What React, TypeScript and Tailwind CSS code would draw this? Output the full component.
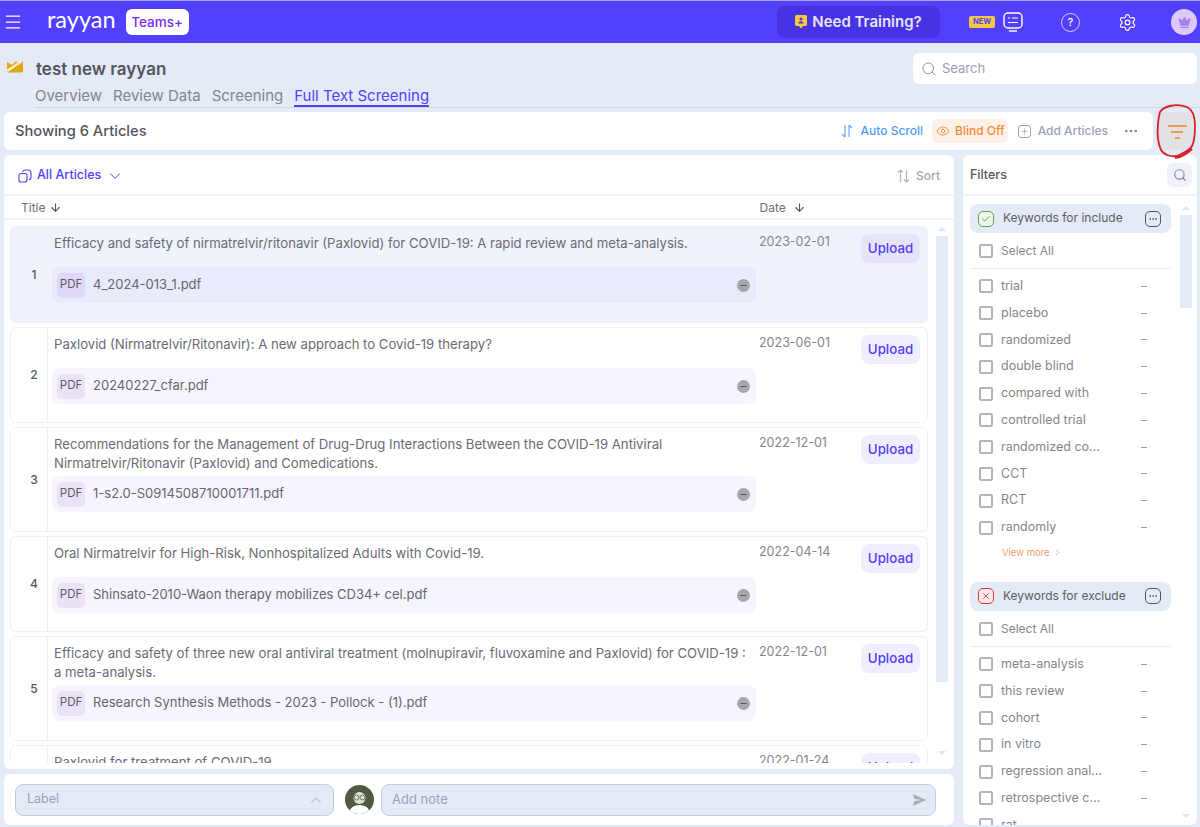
import React from 'react';
import { ChevronDown, ChevronRight, ChevronUp, Crown, Menu, Minus, Search, Settings, Check, X, Ellipsis, Plus, Eye, ArrowDown } from 'lucide-react';

const articles = [
  { n: 1, title: 'Efficacy and safety of nirmatrelvir/ritonavir (Paxlovid) for COVID-19: A rapid review and meta-analysis.', file: '4_2024-013_1.pdf', date: '2023-02-01', active: true, pb: 'pb-[19px]' },
  { n: 2, title: 'Paxlovid (Nirmatrelvir/Ritonavir): A new approach to Covid-19 therapy?', file: '20240227_cfar.pdf', date: '2023-06-01', pb: 'pb-[18px]' },
  { n: 3, title: 'Recommendations for the Management of Drug-Drug Interactions Between the COVID-19 Antiviral\nNirmatrelvir/Ritonavir (Paxlovid) and Comedications.', file: '1-s2.0-S0914508710001711.pdf', date: '2022-12-01', pb: 'pb-[19px]' },
  { n: 4, title: 'Oral Nirmatrelvir for High-Risk, Nonhospitalized Adults with Covid-19.', file: 'Shinsato-2010-Waon therapy mobilizes CD34+ cel.pdf', date: '2022-04-14', pb: 'pb-[18px]' },
  { n: 5, title: 'Efficacy and safety of three new oral antiviral treatment (molnupiravir, fluvoxamine and Paxlovid) for COVID-19 :\na meta-analysis.', file: 'Research Synthesis Methods - 2023 - Pollock - (1).pdf', date: '2022-12-01', pb: 'pb-[19px]' },
  { n: 6, title: 'Paxlovid for treatment of COVID-19', date: '2022-01-24', pb: 'pb-[19px]' },
];

const includeWords = ['trial', 'placebo', 'randomized', 'double blind', 'compared with', 'controlled trial', 'randomized co…', 'CCT', 'RCT', 'randomly'];
const excludeWords = ['meta-analysis', 'this review', 'cohort', 'in vitro', 'regression anal…', 'retrospective c…', 'rat'];

const Box = () => <span className="w-[14px] h-[14px] rounded-[2px] border-2 border-[#b4b4b8] shrink-0" />;

const KeywordRow = ({ label }: { label: string }) => (
  <div className="h-[26.8px] flex items-center pl-[9px] shrink-0">
    <Box />
    <span className="ml-2 w-[140px] text-[12.5px] text-[#85858c]">{label}</span>
    <span className="w-[6px] h-px bg-[#9a9aa0]" />
  </div>
);

const GroupHeader = ({ label, include }: { label: string; include?: boolean }) => (
  <div className="h-[29px] rounded-lg bg-[#e4ebf7] flex items-center pl-2 pr-[10px] shrink-0">
    <span className={`w-[16px] h-[16px] rounded-[5px] border flex items-center justify-center ${include ? 'border-[#5f9e54] bg-[#eef6ea]' : 'border-[#d9363e] bg-[#fbe9ea]'}`}>
      {include ? <Check size={10} className="text-[#4f8f45]" /> : <X size={10} className="text-[#d9363e]" />}
    </span>
    <span className="ml-[9px] -mt-px text-[12px] text-[#5c5c66] flex-1">{label}</span>
    <span className="w-[16px] h-[16px] rounded-[5px] border border-[#55555e] flex items-center justify-center">
      <Ellipsis size={10} className="text-[#55555e]" />
    </span>
  </div>
);

const SelectAll = () => (
  <div className="h-[36px] shrink-0 flex items-center pl-[9px] pt-[1px] border-b border-[#e9ecf2]">
    <Box />
    <span className="ml-2 text-[12px] text-[#85858c]">Select All</span>
  </div>
);

const ScrollBar = ({ thumb, className }: { thumb: string; className: string }) => (
  <div className={`flex flex-col items-center shrink-0 w-[12px] ${className}`}>
    <span className="w-0 h-0 border-x-[4px] border-x-transparent border-b-[4px] border-b-[#dde5f3]" />
    <div className={`w-[12px] bg-[#e4ebf7] mt-[5px] ${thumb}`} />
    <span className="flex-1" />
    <span className="w-0 h-0 border-x-[4px] border-x-transparent border-t-[4px] border-t-[#dde5f3]" />
  </div>
);

export default function App() {
  return (
    <div className="relative h-[827px] overflow-hidden bg-[#e4ebf7] flex flex-col font-['Inter',sans-serif] text-[#5c5c66]">
      {/* Top bar */}
      <header className="h-[43px] shrink-0 bg-[#5340ff] border-t border-[#a9a4e8] flex items-center text-white">
        <Menu size={20} strokeWidth={1.5} className="ml-[3px]" />
        <span className="ml-[24px] text-[23.5px] leading-none font-['Lato',sans-serif] -mt-1">rayyan</span>
        <span className="ml-[10px] h-[26px] w-[63px] rounded-md bg-white text-[#7a2df0] text-[13.5px] font-medium flex items-center justify-center">Teams+</span>
        <div className="ml-auto w-[163px] h-[32px] rounded-lg bg-[#4633e3] flex items-center justify-center gap-[5px] mr-[29px]">
          <svg width="12" height="14" viewBox="0 0 12 14"><path d="M1.5 0h9A1.5 1.5 0 0 1 12 1.5v8A1.5 1.5 0 0 1 10.5 11H8l-2 2.5L4 11H1.5A1.5 1.5 0 0 1 0 9.5v-8A1.5 1.5 0 0 1 1.5 0z" fill="#f5c93a" /><circle cx="6" cy="4" r="1.5" fill="#4633e3" /><path d="M3.5 8.5c0-3 5-3 5 0z" fill="#4633e3" /></svg>
          <span className="text-[15px] font-semibold text-[#e6e3ff]">Need Training?</span>
        </div>
        <span className="w-[26px] h-[12px] rounded-[2px] bg-[#f5c93a] text-[#5340ff] text-[7.5px] font-bold flex items-center justify-center">NEW</span>
        <svg width="20" height="20" viewBox="0 0 20 20" fill="none" stroke="#fff" className="ml-[8px]">
          <rect x="1" y="1" width="18" height="15" rx="4" strokeWidth="1.4" />
          <path d="M5 6h2M9 6h6M5 10.5h10" strokeWidth="1.2" />
          <path d="M6 19h8" strokeWidth="1.4" />
        </svg>
        <span className="ml-[38px] w-[19px] h-[19px] rounded-full border border-[#cfcaff] flex items-center justify-center text-[11px] font-medium">?</span>
        <Settings size={19} strokeWidth={1.5} className="ml-[38px]" />
        <span className="ml-[34px] mr-[3px] w-[26px] h-[26px] rounded-full bg-[#dcc8fb] flex items-center justify-center">
          <Crown size={13} className="text-[#a884e8]" fill="#a884e8" />
        </span>
      </header>

      {/* Review title and tabs */}
      <div className="h-[64px] shrink-0 flex">
        <div className="flex-1 min-w-0">
          <div className="flex items-center pl-[7px] pt-[15px]">
            <svg width="16" height="12" viewBox="0 0 16 12" className="-mt-[5px]">
              <path d="M0 1l5 3 4-4 3 4 4-4v10.5a1 1 0 0 1-1 1H1a1 1 0 0 1-1-1z" fill="#e0a90f" />
              <path d="M0 8.5L10 2l1.5 1.5L1.5 10.5H0z" fill="#f6efd2" />
            </svg>
            <span className="ml-[13px] text-[17px] font-semibold text-[#55555e] leading-[22px]">test new rayyan</span>
          </div>
          <nav className="flex gap-[11px] pl-[35px] mt-[5px] text-[15px] text-[#85858c] leading-[22px]">
            <span>Overview</span>
            <span>Review Data</span>
            <span>Screening</span>
            <span className="text-[#5340ff] border-b-2 border-[#5340ff] h-[22px]">Full Text Screening</span>
          </nav>
        </div>
        <div className="w-[284px] h-[31px] mt-[10px] mr-[3px] rounded-md bg-white flex items-center pl-2 pt-px text-[13px] text-[#9a9db0]">
          <Search size={16} strokeWidth={1.5} className="text-[#8d93aa]" />
          <span className="ml-[5px]">Search</span>
        </div>
      </div>
      <div className="h-px ml-[34px] shrink-0 bg-[#cfd8e8]" />

      {/* Toolbar */}
      <div className="h-[38px] mt-[4px] shrink-0 flex pl-[4px]">
        <div className="w-[1149px] bg-white rounded-md flex items-center pl-[11px] pr-[14px] text-[12px]">
          <span className="text-[14.7px] font-medium text-[#55555e]">Showing 6 Articles</span>
          <svg width="12" height="14" viewBox="0 0 12 14" fill="none" stroke="#5ea4f5" strokeWidth="1.1" className="ml-auto">
            <path d="M4 1v12M4 13l-3-3M8 13V1M8 1l3 3" />
          </svg>
          <span className="ml-[8px] text-[#4f9df5] font-medium">Auto Scroll</span>
          <span className="ml-[9px] h-[24px] rounded-md bg-[#fdf0e6] flex items-center pl-1 pr-[3px] text-[#ef8b3c]">
            <Eye size={14} strokeWidth={1.5} />
            <span className="ml-[5px] font-medium">Blind Off</span>
          </span>
          <span className="ml-[10px] w-[13px] h-[13px] rounded-[3px] border border-[#9aa1b6] flex items-center justify-center">
            <Plus size={9} className="text-[#9aa1b6]" />
          </span>
          <span className="ml-[7px] text-[#9aa1b6] font-medium">Add Articles</span>
          <Ellipsis size={16} className="ml-[15px] text-[#7e86a0]" />
        </div>
        <div className="w-[36px] ml-[5px] pt-[2px] pl-[2px] rounded-md bg-[#e1e1e6] flex flex-col items-center justify-center gap-[4px]">
          <span className="w-[19px] h-[2px] bg-[#ef9a4c]" />
          <span className="w-[12px] h-[2px] bg-[#ef9a4c]" />
          <span className="w-[5px] h-[2px] bg-[#ef9a4c]" />
        </div>
      </div>

      <div className="flex-1 min-h-0 flex mt-[5px] pl-[4px] pb-[2px]">
        {/* Article list */}
        <div className="w-[950px] flex flex-col gap-[5px] shrink-0">
          <div className="h-[614px] bg-white rounded-md flex flex-col overflow-hidden">
            <div className="h-[41px] shrink-0 border-b-2 border-[#f2f3f6] flex items-center pl-[14px] pr-[14px] pt-[2px] text-[12.5px]">
              <svg width="14" height="14" viewBox="0 0 14 14" fill="none" stroke="#5340ff" strokeWidth="1.1">
                <rect x="1" y="4.5" width="8" height="8.5" rx="2" />
                <path d="M4.5 3A3 3 0 0 1 7 1h3a3 3 0 0 1 3 3v4.5a2 2 0 0 1-2 2" />
              </svg>
              <span className="ml-[5px] text-[#5340ff] font-medium">All Articles</span>
              <ChevronDown size={18} strokeWidth={1.3} className="ml-[5px] text-[#5340ff]" />
              <svg width="13" height="14" viewBox="0 0 13 14" fill="none" stroke="#b0b5c4" strokeWidth="1.2" className="ml-auto">
                <path d="M3.5 13V1M1 3.5L3.5 1 6 3.5M9.5 1v12M7 10.5L9.5 13l2.5-2.5" />
              </svg>
              <span className="ml-[6px] text-[#a0a5b5] font-medium text-[12px]">Sort</span>
            </div>
            <div className="h-[24px] shrink-0 flex items-center pt-px text-[12px] text-[#6e6e78] border-b-2 border-[#f2f3f6]">
              <span className="ml-[17px]">Title</span>
              <ArrowDown size={13} strokeWidth={2} className="ml-[4px] text-[#55555e]" />
              <span className="ml-[697px]">Date</span>
              <ArrowDown size={13} strokeWidth={2} className="ml-[7px] text-[#55555e]" />
            </div>
            <div className="flex-1 min-h-0 flex pl-[6px] pt-[6px] mb-[6px]">
              <div className="w-[918px] shrink-0 flex flex-col gap-[4px] overflow-hidden">
                {articles.map((a) => (
                  <div key={a.n} className={`flex shrink-0 rounded-md border border-[#eef0f5] ${a.active ? 'bg-[#eff3fc]' : 'bg-white'}`}>
                    <div className="w-[37px] shrink-0 border-r border-[#eef0f5] flex items-center justify-center text-[12px] font-medium text-[#55555e] pl-[10px]">{a.n}</div>
                    <div className={`w-[708px] shrink-0 pl-[4px] pt-[7px] ${a.pb}`}>
                      <div className="min-h-[30px] mb-[3px] pl-[2px] text-[13.15px] leading-[19px] text-[#6b6b74] whitespace-pre-line">{a.title}</div>
                      {a.file && (
                        <div className={`h-[36px] rounded-lg flex items-center pl-[5px] pr-[6px] ${a.active ? 'bg-[#e8ebf9]' : 'bg-[#f6f5fe]'}`}>
                          <span className={`w-[28px] h-[25px] rounded-[5px] text-[11.5px] flex items-center justify-center ${a.active ? 'bg-[#e0d8f6]' : 'bg-[#ebe2f8]'}`}>PDF</span>
                          <span className="ml-[8px] text-[13px] text-[#666670]">{a.file}</span>
                          <span className="ml-auto w-[13px] h-[13px] rounded-full bg-[#a6a6ac] flex items-center justify-center">
                            <Minus size={9} strokeWidth={3} className="text-[#55555e]" />
                          </span>
                        </div>
                      )}
                    </div>
                    <div className="ml-[3px] w-[102px] shrink-0 pt-[5px] text-[12.5px] leading-[19px] text-[#85858c]">{a.date}</div>
                    <div className="pt-[7px]">
                      <span className={`w-[59px] h-[29px] rounded-lg text-[#5340ff] text-[13.3px] font-medium flex items-center justify-center ${a.active ? 'bg-[#e6e3fb]' : 'bg-[#f0eefe]'}`}>Upload</span>
                    </div>
                  </div>
                ))}
              </div>
              <ScrollBar className="ml-[8px] pb-[8px] pt-[1px]" thumb="h-[446px]" />
            </div>
          </div>

          {/* Label and note */}
          <div className="h-[51px] bg-white rounded-md flex items-center pl-[11px] pr-[18px]">
            <div className="w-[319px] h-[32px] rounded-lg bg-[#e4ebf7] border border-[#c3cde2] flex items-center pl-[11px] pr-[8px] text-[12.5px] text-[#9aa1bd]">
              <span className="flex-1">Label</span>
              <ChevronUp size={18} strokeWidth={1.2} className="text-[#9aa1b6]" />
            </div>
            <svg width="29" height="29" viewBox="0 0 29 29" className="ml-[11px] shrink-0">
              <defs><clipPath id="avatarClip"><circle cx="14.5" cy="14.5" r="14.5" /></clipPath></defs>
              <g clipPath="url(#avatarClip)">
                <rect width="29" height="29" fill="#4f5a40" />
                <ellipse cx="14.5" cy="27" rx="10" ry="7" fill="#fff" />
                <circle cx="14.5" cy="13" r="6" fill="#dfe2d8" />
                <circle cx="11.5" cy="12.5" r="2.5" fill="none" stroke="#4f5a40" strokeWidth="0.8" />
                <circle cx="17.5" cy="12.5" r="2.5" fill="none" stroke="#4f5a40" strokeWidth="0.8" />
              </g>
            </svg>
            <div className="ml-[7px] flex-1 h-[32px] rounded-lg bg-[#e4ebf7] border border-[#c3cde2] flex items-center pl-[10px] pr-[9px] text-[13px] text-[#9aa1bd]">
              <span className="flex-1">Add note</span>
              <svg width="13" height="12" viewBox="0 0 13 12"><path d="M0 0l13 6-13 6 1.5-5L8 6 1.5 5z" fill="#adadb2" /></svg>
            </div>
          </div>
        </div>

        {/* Filters */}
        <aside className="ml-[9px] w-[234px] bg-white rounded-md flex flex-col overflow-hidden">
          <div className="h-[41px] shrink-0 border-b-2 border-[#f2f3f6] flex items-center pl-[7px] pr-[5px] pt-px">
            <span className="flex-1 pt-px text-[12.5px] font-medium text-[#55555e]">Filters</span>
            <span className="w-[25px] h-[24px] rounded-md bg-[#eff2f8] flex items-center justify-center">
              <Search size={14} className="text-[#7f8ba5]" />
            </span>
          </div>
          <div className="flex-1 min-h-0 flex pl-[7px] pt-[8px]">
            <div className="w-[201px] shrink-0 flex flex-col overflow-hidden">
              <GroupHeader label="Keywords for include" include />
              <SelectAll />
              <div className="h-[4px] shrink-0" />
              {includeWords.map((w) => <KeywordRow key={w} label={w} />)}
              <div className="h-[24px] shrink-0 flex items-center pl-[32px] text-[9.5px] text-[#ef9a6a] gap-[3px]">
                View more <ChevronRight size={9} />
              </div>
              <div className="h-[17px] shrink-0" />
              <GroupHeader label="Keywords for exclude" />
              <SelectAll />
              <div className="h-[4px] shrink-0" />
              {excludeWords.map((w) => <KeywordRow key={w} label={w} />)}
            </div>
            <ScrollBar className="ml-[9px] pb-[7px] pt-[2px]" thumb="h-[93px]" />
          </div>
        </aside>
      </div>

      {/* Hand drawn annotation */}
      <svg width="44" height="56" viewBox="0 0 44 56" fill="none" stroke="#dc1f26" strokeWidth="1.8" className="absolute left-[1154px] top-[103px]">
        <path d="M6 9C10 3 22 0 33 4c6 3 8 9 8 18 0 9 0 16-3 21-2 4-8 7-15 10-6 1-13-1-16-6C4 40 3 30 4 22c0-5 1-9 2-13zM38 46c-5 5-10 8-17 9" />
      </svg>
    </div>
  );
}
